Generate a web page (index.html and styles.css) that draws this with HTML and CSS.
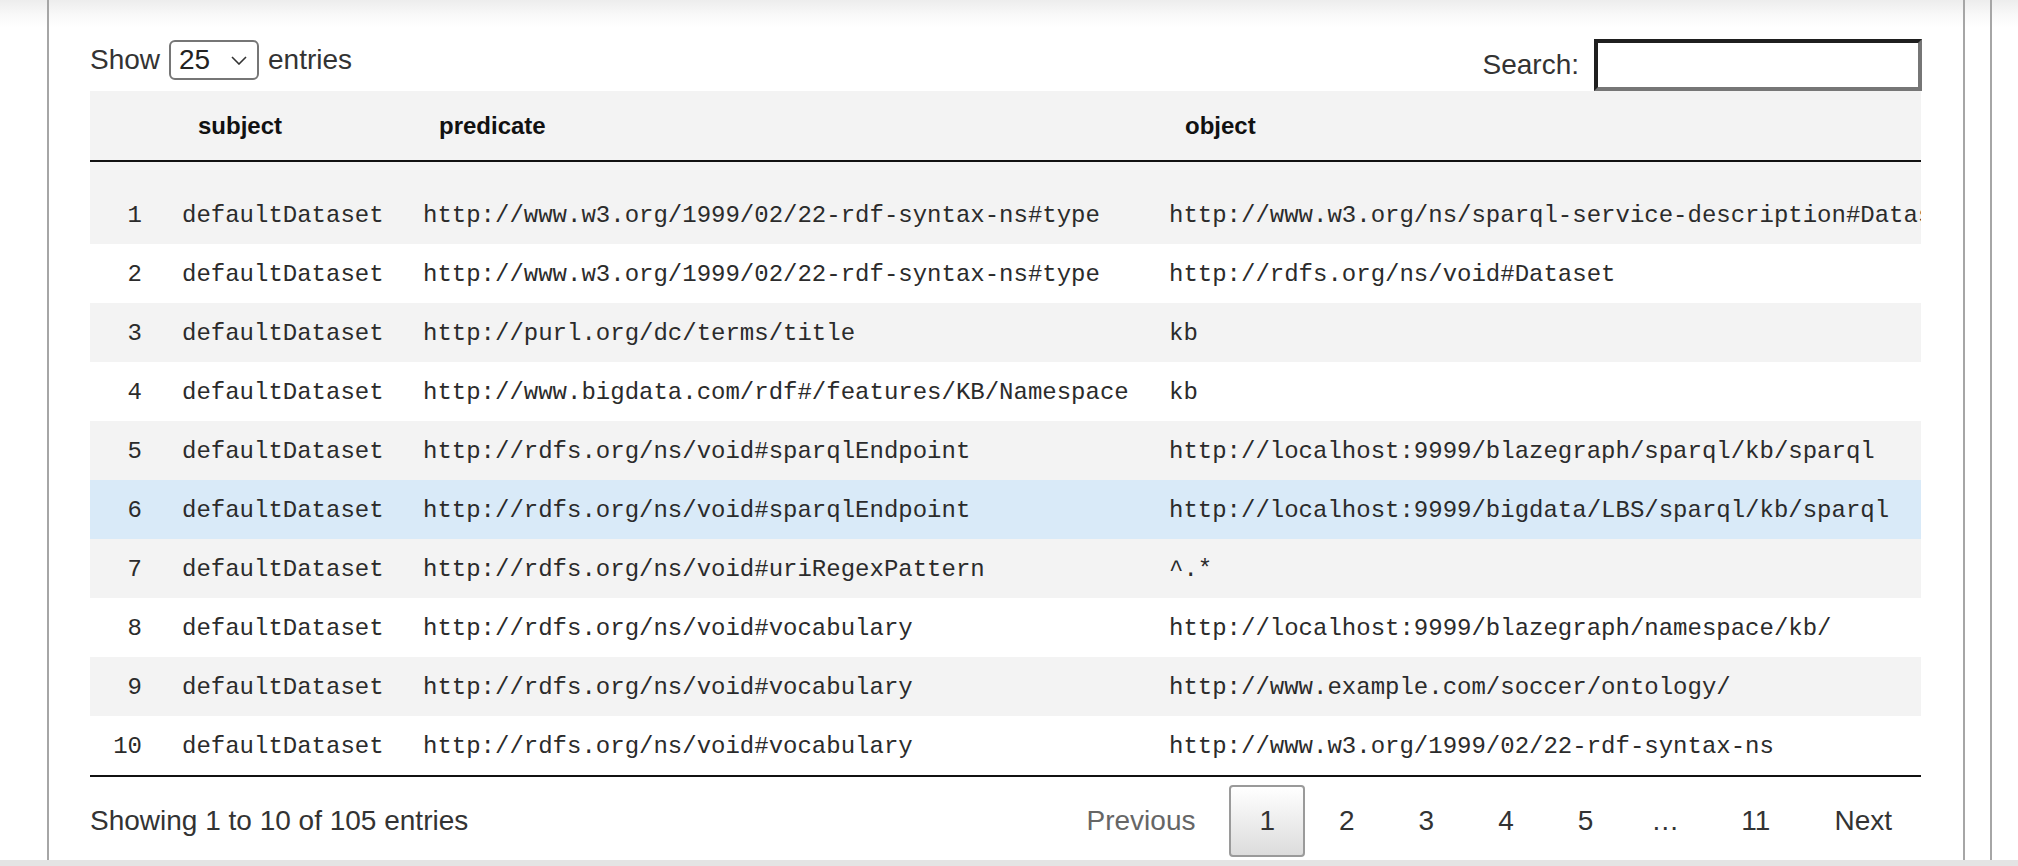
FILE: index.html
```html
<!DOCTYPE html>
<html lang="en">
<head>
<meta charset="utf-8">
<title>Triples</title>
<link rel="stylesheet" href="styles.css">
</head>
<body>
<div class="frame">
  <div class="main">
    <div class="gutter"></div>
    <div class="panel">
      <div class="controls">
        <div class="length">
          <span>Show</span>
          <span class="select-wrap">
            <select class="select"><option>10</option><option selected>25</option><option>50</option><option>100</option></select>
            <svg class="chev" width="16" height="9" viewBox="0 0 16 9"><path d="M1 1 L8 8 L15 1" fill="none" stroke="#333" stroke-width="1.6"/></svg>
          </span>
          <span>entries</span>
        </div>
        <label class="search">
          <span>Search:</span>
          <input class="search-input" type="search">
        </label>
      </div>
      <div class="scroll">
        <table class="grid">
          <colgroup>
            <col class="c-num"><col class="c-sub"><col class="c-pred"><col class="c-obj">
          </colgroup>
          <thead>
            <tr><th></th><th>subject</th><th>predicate</th><th>object</th></tr>
          </thead>
          <tbody>
            <tr class="spacer"><td colspan="4"></td></tr>
            <tr class="odd"><td class="num">1</td><td>defaultDataset</td><td>http://www.w3.org/1999/02/22-rdf-syntax-ns#type</td><td>http://www.w3.org/ns/sparql-service-description#Dataset</td></tr>
            <tr class="even"><td class="num">2</td><td>defaultDataset</td><td>http://www.w3.org/1999/02/22-rdf-syntax-ns#type</td><td>http://rdfs.org/ns/void#Dataset</td></tr>
            <tr class="odd"><td class="num">3</td><td>defaultDataset</td><td>http://purl.org/dc/terms/title</td><td>kb</td></tr>
            <tr class="even"><td class="num">4</td><td>defaultDataset</td><td>http://www.bigdata.com/rdf#/features/KB/Namespace</td><td>kb</td></tr>
            <tr class="odd"><td class="num">5</td><td>defaultDataset</td><td>http://rdfs.org/ns/void#sparqlEndpoint</td><td>http://localhost:9999/blazegraph/sparql/kb/sparql</td></tr>
            <tr class="hover"><td class="num">6</td><td>defaultDataset</td><td>http://rdfs.org/ns/void#sparqlEndpoint</td><td>http://localhost:9999/bigdata/LBS/sparql/kb/sparql</td></tr>
            <tr class="odd"><td class="num">7</td><td>defaultDataset</td><td>http://rdfs.org/ns/void#uriRegexPattern</td><td>^.*</td></tr>
            <tr class="even"><td class="num">8</td><td>defaultDataset</td><td>http://rdfs.org/ns/void#vocabulary</td><td>http://localhost:9999/blazegraph/namespace/kb/</td></tr>
            <tr class="odd"><td class="num">9</td><td>defaultDataset</td><td>http://rdfs.org/ns/void#vocabulary</td><td>http://www.example.com/soccer/ontology/</td></tr>
            <tr class="even"><td class="num">10</td><td>defaultDataset</td><td>http://rdfs.org/ns/void#vocabulary</td><td>http://www.w3.org/1999/02/22-rdf-syntax-ns</td></tr>
          </tbody>
        </table>
      </div>
      <div class="footer">
        <div class="info">Showing 1 to 10 of 105 entries</div>
        <div class="paginate">
          <a class="pbtn disabled">Previous</a>
          <a class="pbtn current">1</a>
          <a class="pbtn">2</a>
          <a class="pbtn">3</a>
          <a class="pbtn">4</a>
          <a class="pbtn">5</a>
          <span class="ellipsis">…</span>
          <a class="pbtn">11</a>
          <a class="pbtn">Next</a>
        </div>
      </div>
    </div>
    <div class="side-gap"></div>
    <div class="side-line"></div>
  </div>
  <div class="bottom-band"></div>
</div>
</body>
</html>
```

FILE: styles.css
```css
html, body {
  margin: 0;
  padding: 0;
}
body {
  background: linear-gradient(to bottom, #ededed 0px, #f8f8f8 14px, #ffffff 28px) no-repeat;
  background-color: #fff;
  font-family: "Liberation Sans", Arial, sans-serif;
  font-size: 28px;
  color: #333;
}
.frame {
  height: 866px;
  display: flex;
  flex-direction: column;
  overflow: hidden;
}
.main {
  flex: 1;
  display: flex;
  min-height: 0;
}
.gutter {
  width: 47px;
  flex: none;
}
.panel {
  flex: none;
  width: 1918px;
  border-left: 2px solid #a6a6a6;
  border-right: 2px solid #a6a6a6;
  padding: 39px 42px 0 41px;
  box-sizing: border-box;
}
.side-gap {
  width: 25px;
  flex: none;
}
.side-line {
  flex: 1;
  border-left: 2px solid #a6a6a6;
}
.bottom-band {
  height: 6px;
  background: #e4e4e4;
  flex: none;
}

/* controls */
.controls {
  display: flex;
  justify-content: space-between;
  align-items: flex-start;
  height: 52px;
}
.length {
  display: flex;
  align-items: center;
  gap: 9px;
  height: 40px;
  line-height: 40px;
  padding-top: 1px;
}
.select-wrap {
  position: relative;
  display: inline-block;
  height: 40px;
  margin-top: -1px;
}
.select {
  -webkit-appearance: none;
  appearance: none;
  width: 90px;
  height: 40px;
  box-sizing: border-box;
  border: 2px solid #767676;
  border-radius: 6px;
  background: #fff;
  font-family: "Liberation Sans", Arial, sans-serif;
  font-size: 28px;
  color: #222;
  padding: 0 0 0 8px;
  margin: 0;
  display: block;
}
.chev {
  position: absolute;
  right: 12px;
  top: 16px;
  pointer-events: none;
}
.search {
  display: flex;
  align-items: center;
  gap: 15px;
  height: 52px;
  margin-right: -1px;
}
.search-input {
  width: 328px;
  height: 52px;
  box-sizing: border-box;
  border-style: solid;
  border-width: 4px;
  border-color: #1f1f1f #767676 #767676 #1f1f1f;
  background: #fff;
  margin: 0;
  padding: 0 6px;
  font-size: 28px;
  outline: none;
}

/* table */
.scroll {
  width: 1831px;
  overflow: hidden;
  border-bottom: 2px solid #111;
}
.grid {
  table-layout: fixed;
  width: 1891px;
  border-collapse: separate;
  border-spacing: 0;
}
.c-num { width: 72px; }
.c-sub { width: 241px; }
.c-pred { width: 746px; }
.c-obj { width: 832px; }
.grid thead th {
  height: 71px;
  box-sizing: border-box;
  padding: 0 36px;
  background: #f3f3f3;
  border-bottom: 2px solid #111;
  text-align: left;
  font-family: "Liberation Sans", Arial, sans-serif;
  font-size: 24px;
  font-weight: bold;
  color: #111;
  white-space: nowrap;
}
.grid tbody td {
  height: 59px;
  box-sizing: border-box;
  padding: 2px 20px 0;
  font-family: "Liberation Mono", "Courier New", monospace;
  font-size: 24px;
  color: #2b2b2b;
  white-space: nowrap;
  overflow: visible;
  vertical-align: middle;
}
.grid tbody tr.spacer td {
  height: 23px;
  padding: 0;
  background: #f3f3f3;
}
.grid tbody td.num {
  text-align: right;
}
.grid tr.odd td { background: #f3f3f3; }
.grid tr.even td { background: #fff; }
.grid tr.hover td { background: #d9eaf8; }

/* footer */
.footer {
  display: flex;
  justify-content: space-between;
  align-items: center;
  margin-top: 8px;
}
.info {
  line-height: 40px;
}
.paginate {
  display: flex;
  align-items: center;
  margin-right: -1px;
}
.pbtn {
  display: inline-block;
  box-sizing: border-box;
  min-width: 42px;
  padding: 14px 28px;
  margin-left: 4px;
  line-height: 40px;
  border: 2px solid transparent;
  border-radius: 4px;
  color: #333;
  text-align: center;
  text-decoration: none;
}
.pbtn.disabled {
  color: #666;
}
.pbtn.current {
  border-color: #9a9a9a;
  background: linear-gradient(to bottom, #ffffff 0%, #dcdcdc 100%);
  color: #333;
}
.ellipsis {
  display: inline-block;
  padding: 0 28px;
  line-height: 40px;
}
```
